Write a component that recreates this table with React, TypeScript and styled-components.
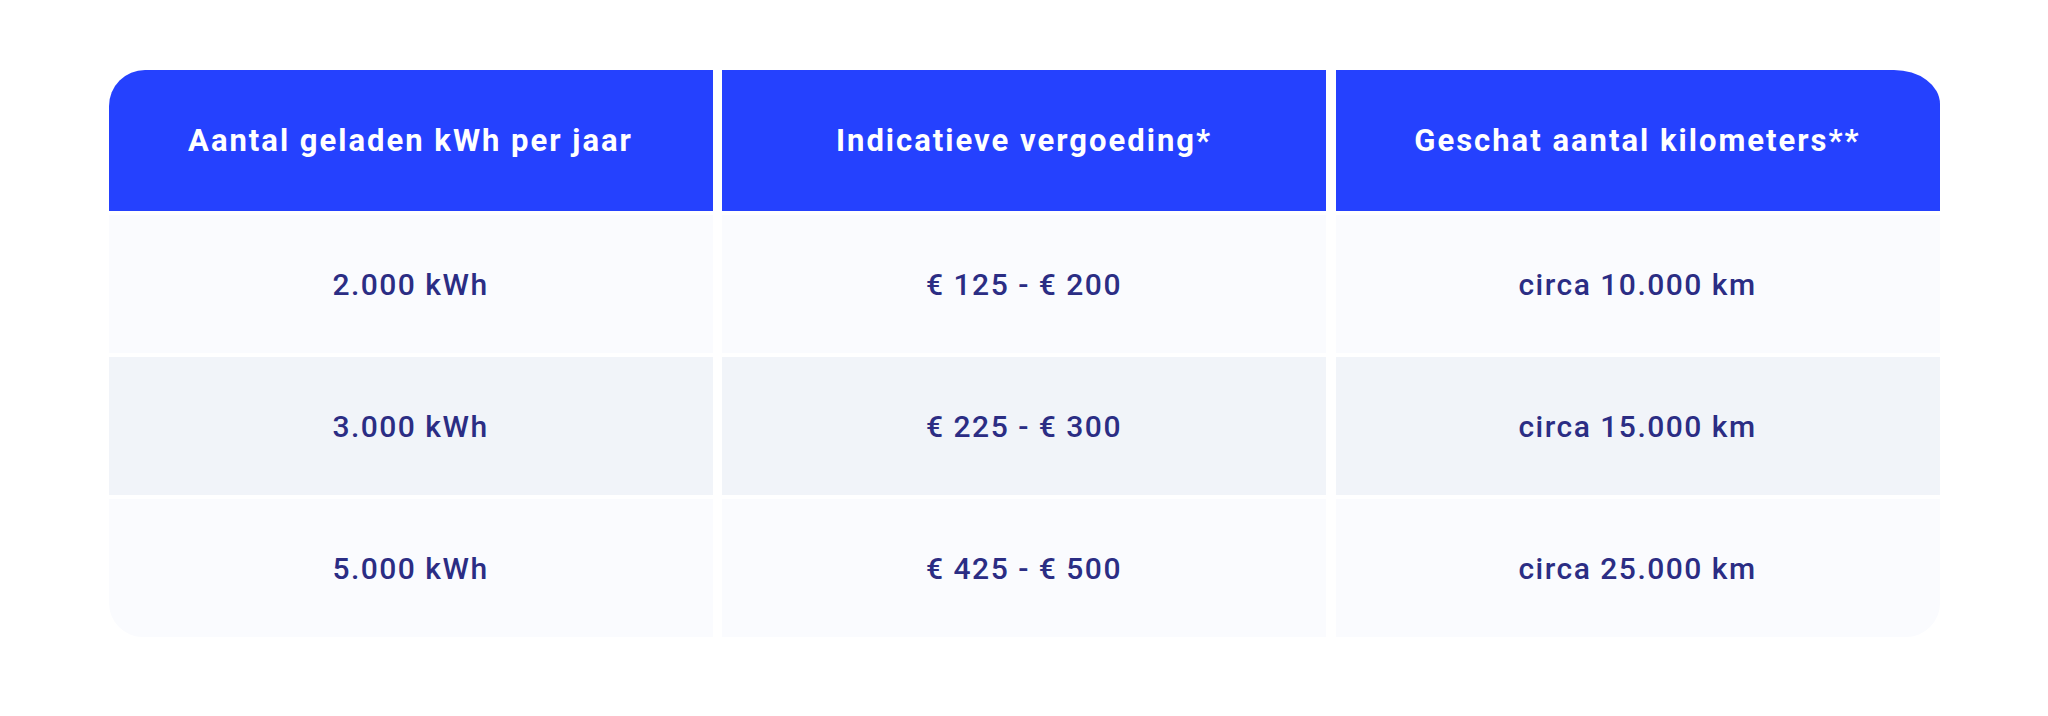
import React from 'react';
import styled, { createGlobalStyle } from 'styled-components';

const GlobalStyle = createGlobalStyle`
  html, body {
    margin: 0;
    padding: 0;
    background: #ffffff;
  }
  body {
    font-family: Roboto, 'Liberation Sans', sans-serif;
  }
`;

const headers = [
  'Aantal geladen kWh per jaar',
  'Indicatieve vergoeding*',
  'Geschat aantal kilometers**',
];

const rows = [
  ['2.000 kWh', '€ 125 - € 200', 'circa 10.000 km'],
  ['3.000 kWh', '€ 225 - € 300', 'circa 15.000 km'],
  ['5.000 kWh', '€ 425 - € 500', 'circa 25.000 km'],
];

const App = () => {
  return (
    <>
      <GlobalStyle />
      <Page>
        <Table>
          {headers.map((h, i) => (
            <HeaderCell key={h} $col={i}>
              {h}
            </HeaderCell>
          ))}
          {rows.map((row, r) =>
            row.map((value, c) => (
              <Cell
                key={`${r}-${c}`}
                $striped={r % 2 === 1}
                $col={c}
                $last={r === rows.length - 1}
              >
                {value}
              </Cell>
            ))
          )}
        </Table>
      </Page>
    </>
  );
};

export default App;

const Page = styled.div`
  width: 2048px;
  height: 716px;
  box-sizing: border-box;
  padding-top: 70px;
  display: flex;
  justify-content: center;
  align-items: flex-start;
`;

const Table = styled.div`
  display: grid;
  grid-template-columns: repeat(3, 604px);
  grid-template-rows: 141px repeat(3, 138px);
  column-gap: 9.5px;
  row-gap: 4px;
`;

const HeaderCell = styled.div<{ $col: number }>`
  display: flex;
  align-items: center;
  justify-content: center;
  background: #2541fe;
  color: #ffffff;
  font-size: 31px;
  font-weight: 700;
  letter-spacing: 2px;
  border-top-left-radius: ${(p) => (p.$col === 0 ? '36px' : '0')};
  border-top-right-radius: ${(p) => (p.$col === 2 ? '46px 34px' : '0')};
`;

const Cell = styled.div<{ $striped: boolean; $col: number; $last: boolean }>`
  display: flex;
  align-items: center;
  justify-content: center;
  background: ${(p) => (p.$striped ? '#f1f4f9' : '#fafbfe')};
  color: #2b2d84;
  font-size: 30px;
  font-weight: 500;
  letter-spacing: 1.5px;
  border-bottom-left-radius: ${(p) => (p.$last && p.$col === 0 ? '34px' : '0')};
  border-bottom-right-radius: ${(p) => (p.$last && p.$col === 2 ? '34px' : '0')};
`;
